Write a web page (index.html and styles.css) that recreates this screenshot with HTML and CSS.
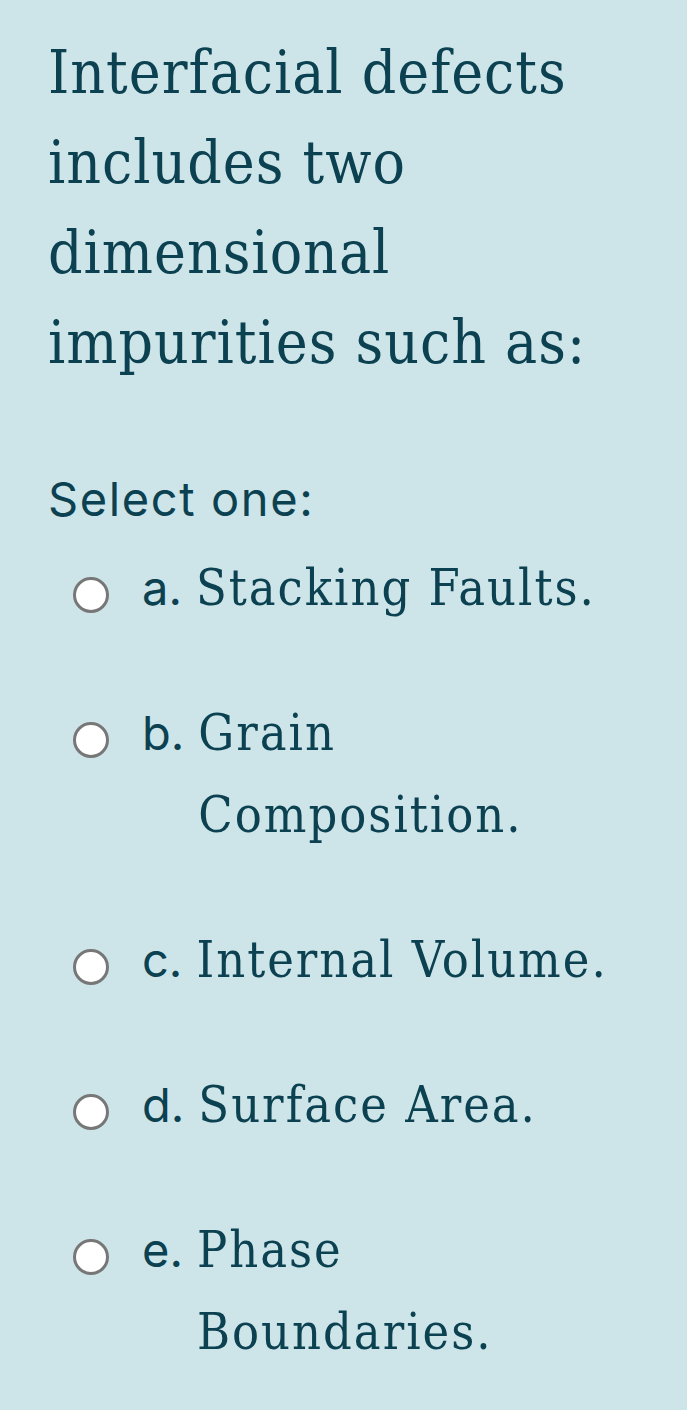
FILE: index.html
```html
<!DOCTYPE html>
<html lang="en">
<head>
<meta charset="utf-8">
<link rel="stylesheet" href="styles.css">
<title>Question</title>
</head>
<body>
<div class="question">
  <div class="qtext">Interfacial defects includes two dimensional impurities such as:</div>
  <div class="prompt">Select one:</div>
  <div class="answers">
    <div class="opt"><span class="radio"></span><span class="letter">a.</span><span class="text">Stacking Faults.</span></div>
    <div class="opt"><span class="radio"></span><span class="letter">b.</span><span class="text">Grain<br>Composition.</span></div>
    <div class="opt"><span class="radio"></span><span class="letter">c.</span><span class="text">Internal Volume.</span></div>
    <div class="opt"><span class="radio"></span><span class="letter">d.</span><span class="text">Surface Area.</span></div>
    <div class="opt"><span class="radio"></span><span class="letter">e.</span><span class="text">Phase<br>Boundaries.</span></div>
  </div>
</div>
</body>
</html>
```
FILE: styles.css
```css
html, body {
  margin: 0;
  padding: 0;
  background: #cde5e9;
}
body {
  color: #0b4150;
  min-height: 1410px;
}
.question {
  padding: 27px 30px 0 48px;
}
.qtext {
  font-family: "DejaVu Serif Condensed", "DejaVu Serif", serif;
  font-stretch: condensed;
  font-size: 60px;
  letter-spacing: 1px;
  line-height: 90px;
  width: 580px;
}
.prompt {
  font-family: Inter, "Noto Sans", sans-serif;
  font-size: 47px;
  letter-spacing: 1.6px;
  line-height: 60px;
  margin-top: 82px;
  margin-bottom: 18px;
}
.answers {
  padding-left: 25px;
  display: flex;
  flex-direction: column;
  gap: 63px;
}
.opt {
  display: flex;
  align-items: flex-start;
  font-family: "DejaVu Serif Condensed", "DejaVu Serif", serif;
  font-stretch: condensed;
  font-size: 50px;
  letter-spacing: 2px;
  line-height: 82px;
}
.radio {
  flex: none;
  width: 30px;
  height: 30px;
  border: 3px solid #777;
  border-radius: 50%;
  background: #fff;
  margin-top: 30px;
  margin-right: 33px;
}
.letter {
  font-family: Inter, "Noto Sans", sans-serif;
  font-size: 47px;
  letter-spacing: 0;
  margin-right: 14px;
}
```
